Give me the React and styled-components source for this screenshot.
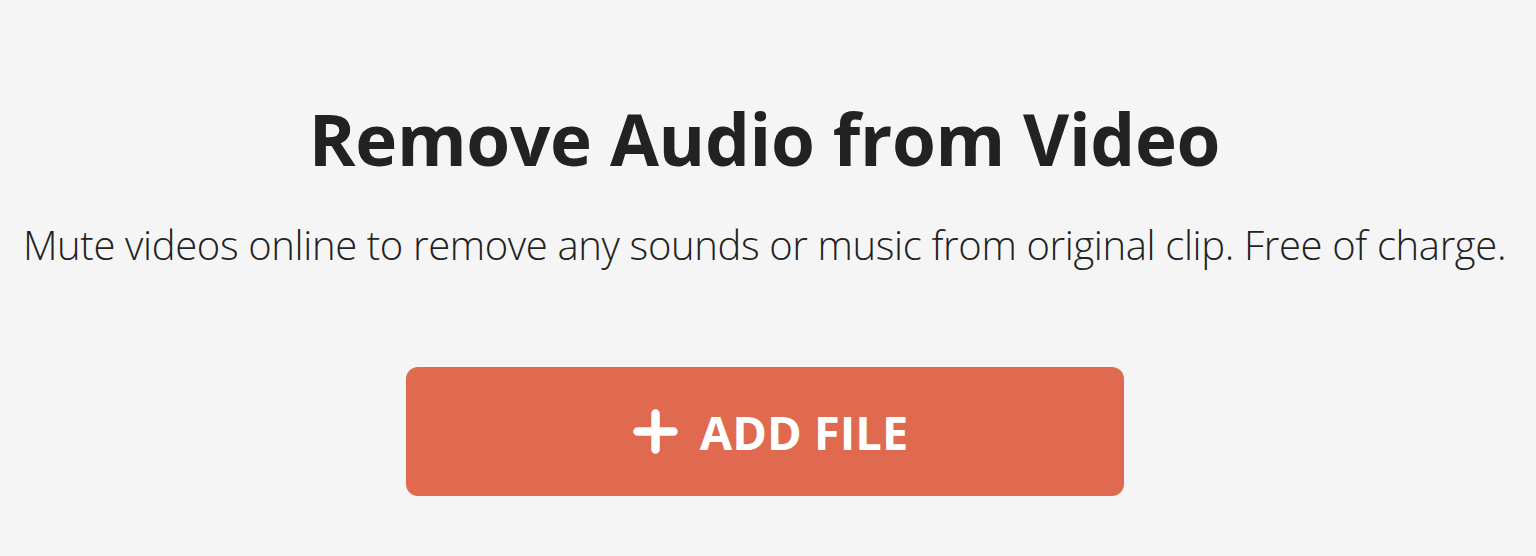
import React from 'react'
import styled, { createGlobalStyle } from 'styled-components'

const GlobalStyle = createGlobalStyle`
  html, body {
    margin: 0;
    padding: 0;
    background: #f5f5f5;
  }
  body {
    font-family: 'Open Sans', 'Liberation Sans', sans-serif;
  }
`

const Page = styled.main`
  display: flex;
  flex-direction: column;
  align-items: center;
  height: 556px;
  padding: 91px 7px 0 0;
  box-sizing: border-box;
  background: #f5f5f5;
`

const Title = styled.h1`
  margin: 0;
  font-size: 71px;
  line-height: 96px;
  font-weight: 700;
  letter-spacing: -0.3px;
  color: #222222;
`

const Subtitle = styled.p`
  margin: 34px 0 0;
  font-size: 40px;
  line-height: 48px;
  font-weight: 300;
  letter-spacing: -0.36px;
  color: #222222;
  white-space: nowrap;
`

const AddButton = styled.button`
  display: flex;
  align-items: center;
  justify-content: center;
  gap: 22px;
  width: 718px;
  height: 129px;
  margin-top: 98px;
  padding: 0 0 0 12px;
  border: none;
  border-radius: 12px;
  background: #e06a4f;
  color: #ffffff;
  font-family: 'Open Sans', 'Liberation Sans', sans-serif;
  font-size: 47px;
  font-weight: 700;
  cursor: pointer;
`

const PlusIcon = () => (
  <svg width='45' height='45' viewBox='0 0 45 45' fill='none'>
    <path d='M22.5 4.5v36M4.5 22.5h36' stroke='#fff' strokeWidth='8.5' strokeLinecap='round' />
  </svg>
)

const App = () => {
  return (
    <>
      <GlobalStyle />
      <Page>
        <Title>Remove Audio from Video</Title>
        <Subtitle>Mute videos online to remove any sounds or music from original clip. Free of charge.</Subtitle>
        <AddButton>
          <PlusIcon />
          ADD FILE
        </AddButton>
      </Page>
    </>
  )
}

export default App
